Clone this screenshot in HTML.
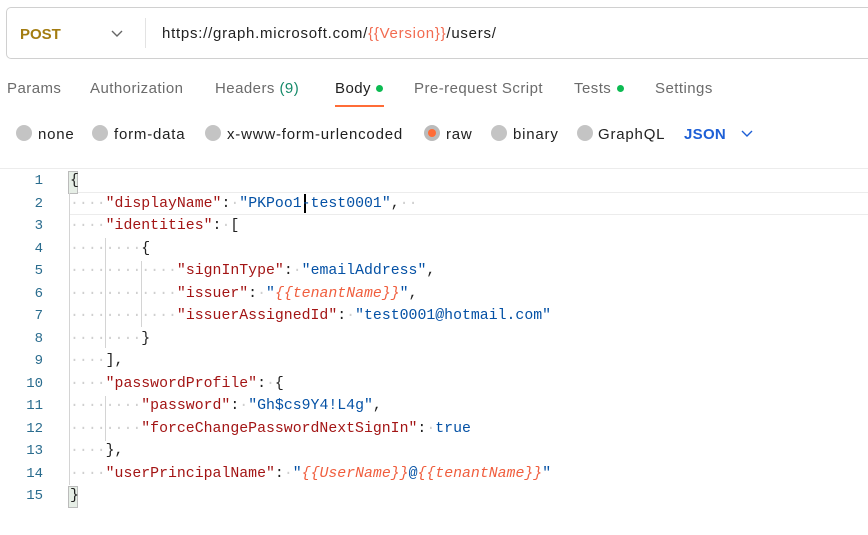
<!DOCTYPE html>
<html><head><style>
body{margin:0;width:868px;height:535px;background:#fff;position:relative;overflow:hidden;font-family:"Liberation Sans",sans-serif;}
.a{position:absolute;white-space:pre;}
.tab{position:absolute;top:80px;font-size:15px;color:#6b6b6b;letter-spacing:0.45px;}
.rd{position:absolute;top:125px;width:16px;height:16px;border-radius:50%;background:#c4c4c4;}
.rl{position:absolute;top:126px;font-size:15px;color:#212121;line-height:18px;letter-spacing:0.8px;}
.ln{position:absolute;left:0;width:43px;text-align:right;font-family:"Liberation Mono",monospace;font-size:14px;color:#2a6c8e;}
.cl{position:absolute;left:70px;font-family:"Liberation Mono",monospace;font-size:14.85px;color:#212121;white-space:pre;}
.k{color:#a31515}.s{color:#0451a5}.t{color:#f05e3e;font-style:italic}.b{color:#0451a5}
.d{color:#cfcfcf}
.g{position:absolute;width:1px;background:#d4d4d4;}
</style></head><body>
<div class="a" style="left:6px;top:7px;width:870px;height:50px;border:1px solid #d0d0d0;border-radius:5px;"></div>
<div class="a" style="left:20px;top:26px;font-size:15px;font-weight:bold;color:#a37c11;">POST</div>
<svg class="a" style="left:110px;top:29px" width="14" height="10"><path d="M2 2 L7 7 L12 2" stroke="#666" stroke-width="1.4" fill="none"/></svg>
<div class="a" style="left:145px;top:18px;width:1px;height:30px;background:#e3e3e3"></div>
<div class="a" style="left:162px;top:25px;font-size:15px;color:#212121;letter-spacing:0.75px;">https://graph.microsoft.com/<span style="color:#f26b50">{{Version}}</span>/users/</div>
<div class="tab" style="left:7px">Params</div>
<div class="tab" style="left:90px">Authorization</div>
<div class="tab" style="left:215px">Headers <span style="color:#168a6a">(9)</span></div>
<div class="tab" style="left:335px;color:#212121">Body</div>
<div class="a" style="left:376px;top:85px;width:7px;height:7px;border-radius:50%;background:#0cbb52"></div>
<div class="a" style="left:335px;top:105px;width:49px;height:2px;background:#ff6c37"></div>
<div class="tab" style="left:414px">Pre-request Script</div>
<div class="tab" style="left:574px">Tests</div>
<div class="a" style="left:617px;top:85px;width:7px;height:7px;border-radius:50%;background:#0cbb52"></div>
<div class="tab" style="left:655px">Settings</div>
<div class="rd" style="left:16px"></div><div class="rl" style="left:38px">none</div>
<div class="rd" style="left:92px"></div><div class="rl" style="left:114px">form-data</div>
<div class="rd" style="left:205px"></div><div class="rl" style="left:227px">x-www-form-urlencoded</div>
<div class="rd" style="left:424px;background:#bbb"></div><div class="a" style="left:428px;top:129px;width:8px;height:8px;border-radius:50%;background:#ff6c37"></div><div class="rl" style="left:446px">raw</div>
<div class="rd" style="left:491px"></div><div class="rl" style="left:513px">binary</div>
<div class="rd" style="left:577px"></div><div class="rl" style="left:598px">GraphQL</div>
<div class="rl" style="left:684px;color:#1d5fd6;font-weight:bold;letter-spacing:0.3px">JSON</div>
<svg class="a" style="left:740px;top:129px" width="14" height="10"><path d="M2 2 L7 7 L12 2" stroke="#1d5fd6" stroke-width="1.4" fill="none"/></svg>
<div class="a" style="left:0;top:168px;width:868px;height:1px;background:#ececec"></div>
<div class="a" style="left:69px;top:192px;width:799px;height:21px;border-top:1px solid #ececec;border-bottom:1px solid #ececec"></div>
<div class="a" style="left:68px;top:171px;width:8px;height:21px;background:#e6eee6;border:1px solid #bbb"></div>
<div class="a" style="left:68px;top:486px;width:8px;height:20px;background:#e6eee6;border:1px solid #bbb"></div>
<div class="g" style="left:69px;top:193px;height:292px"></div>
<div class="g" style="left:105px;top:238px;height:110px"></div>
<div class="g" style="left:141px;top:261px;height:66px"></div>
<div class="g" style="left:105px;top:396px;height:45px"></div>
<div class="a" style="left:304px;top:194px;width:2px;height:19px;background:#000"></div>
<div style="position:absolute;top:173px;left:0">
<div class="ln" style="top:0">1</div><div class="ln" style="top:22.5px">2</div><div class="ln" style="top:45px">3</div><div class="ln" style="top:67.5px">4</div><div class="ln" style="top:90px">5</div><div class="ln" style="top:112.5px">6</div><div class="ln" style="top:135px">7</div><div class="ln" style="top:157.5px">8</div><div class="ln" style="top:180px">9</div><div class="ln" style="top:202.5px">10</div><div class="ln" style="top:225px">11</div><div class="ln" style="top:247.5px">12</div><div class="ln" style="top:270px">13</div><div class="ln" style="top:292.5px">14</div><div class="ln" style="top:315px">15</div>
<div class="cl" style="top:0">{</div>
<div class="cl" style="top:22.5px"><span class="d">····</span><span class="k">"displayName"</span>:<span class="d">·</span><span class="s">"PKPoo1-test0001"</span>,<span class="d">··</span></div>
<div class="cl" style="top:45px"><span class="d">····</span><span class="k">"identities"</span>:<span class="d">·</span>[</div>
<div class="cl" style="top:67.5px"><span class="d">········</span>{</div>
<div class="cl" style="top:90px"><span class="d">············</span><span class="k">"signInType"</span>:<span class="d">·</span><span class="s">"emailAddress"</span>,</div>
<div class="cl" style="top:112.5px"><span class="d">············</span><span class="k">"issuer"</span>:<span class="d">·</span><span class="s">"</span><span class="t">{{tenantName}}</span><span class="s">"</span>,</div>
<div class="cl" style="top:135px"><span class="d">············</span><span class="k">"issuerAssignedId"</span>:<span class="d">·</span><span class="s">"test0001@hotmail.com"</span></div>
<div class="cl" style="top:157.5px"><span class="d">········</span>}</div>
<div class="cl" style="top:180px"><span class="d">····</span>],</div>
<div class="cl" style="top:202.5px"><span class="d">····</span><span class="k">"passwordProfile"</span>:<span class="d">·</span>{</div>
<div class="cl" style="top:225px"><span class="d">········</span><span class="k">"password"</span>:<span class="d">·</span><span class="s">"Gh$cs9Y4!L4g"</span>,</div>
<div class="cl" style="top:247.5px"><span class="d">········</span><span class="k">"forceChangePasswordNextSignIn"</span>:<span class="d">·</span><span class="b">true</span></div>
<div class="cl" style="top:270px"><span class="d">····</span>},</div>
<div class="cl" style="top:292.5px"><span class="d">····</span><span class="k">"userPrincipalName"</span>:<span class="d">·</span><span class="s">"</span><span class="t">{{UserName}}</span><span class="s">@</span><span class="t">{{tenantName}}</span><span class="s">"</span></div>
<div class="cl" style="top:315px">}</div>
</div>
</body></html>
